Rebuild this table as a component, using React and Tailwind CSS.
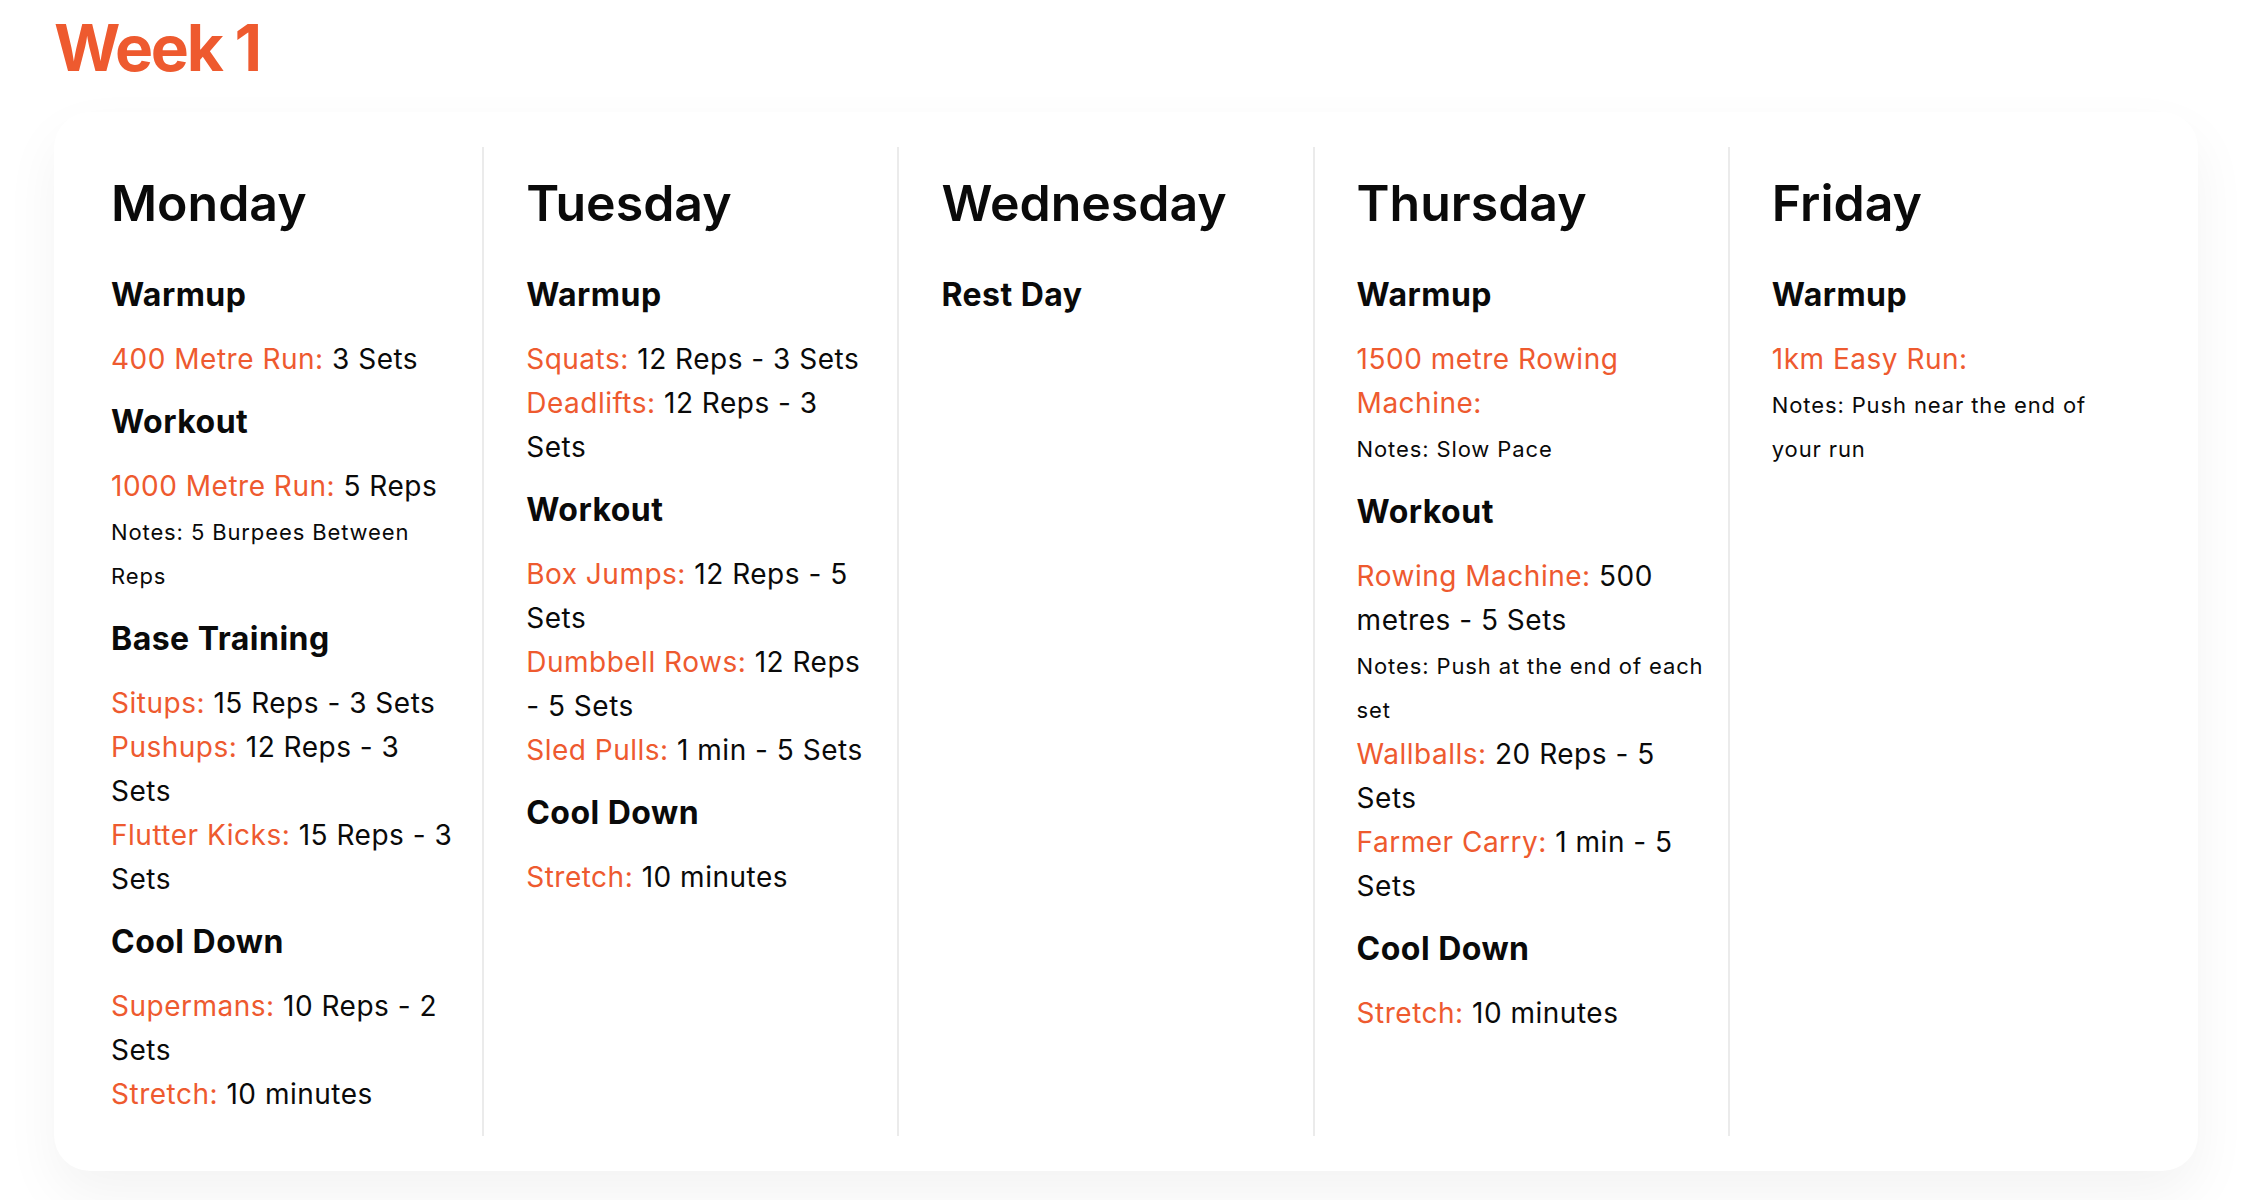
import React from 'react';

const days = [
  {
    name: 'Monday',
    sections: [
      { title: 'Warmup', items: [{ label: '400 Metre Run:', value: '3 Sets' }] },
      {
        title: 'Workout',
        items: [{ label: '1000 Metre Run:', value: '5 Reps', notes: '5 Burpees Between Reps' }],
      },
      {
        title: 'Base Training',
        items: [
          { label: 'Situps:', value: '15 Reps - 3 Sets' },
          { label: 'Pushups:', value: '12 Reps - 3 Sets' },
          { label: 'Flutter Kicks:', value: '15 Reps - 3 Sets' },
        ],
      },
      {
        title: 'Cool Down',
        items: [
          { label: 'Supermans:', value: '10 Reps - 2 Sets' },
          { label: 'Stretch:', value: '10 minutes' },
        ],
      },
    ],
  },
  {
    name: 'Tuesday',
    sections: [
      {
        title: 'Warmup',
        items: [
          { label: 'Squats:', value: '12 Reps - 3 Sets' },
          { label: 'Deadlifts:', value: '12 Reps - 3 Sets' },
        ],
      },
      {
        title: 'Workout',
        items: [
          { label: 'Box Jumps:', value: '12 Reps - 5 Sets' },
          { label: 'Dumbbell Rows:', value: '12 Reps - 5 Sets' },
          { label: 'Sled Pulls:', value: '1 min - 5 Sets' },
        ],
      },
      { title: 'Cool Down', items: [{ label: 'Stretch:', value: '10 minutes' }] },
    ],
  },
  {
    name: 'Wednesday',
    sections: [{ title: 'Rest Day', items: [] }],
  },
  {
    name: 'Thursday',
    sections: [
      {
        title: 'Warmup',
        items: [{ label: '1500 metre Rowing Machine:', notes: 'Slow Pace' }],
      },
      {
        title: 'Workout',
        items: [
          { label: 'Rowing Machine:', value: '500 metres - 5 Sets', notes: 'Push at the end of each set' },
          { label: 'Wallballs:', value: '20 Reps - 5 Sets' },
          { label: 'Farmer Carry:', value: '1 min - 5 Sets' },
        ],
      },
      { title: 'Cool Down', items: [{ label: 'Stretch:', value: '10 minutes' }] },
    ],
  },
  {
    name: 'Friday',
    sections: [
      {
        title: 'Warmup',
        items: [{ label: '1km Easy Run:', notes: 'Push near the end of your run' }],
      },
    ],
  },
];

const Exercise = ({ item }) => (
  <div>
    <p className="text-[28px] leading-[44px] tracking-[0.018em] text-[#0a0a0a]">
      <span className="text-[#ee5a2f]">{item.label}</span>
      {item.value && <> {item.value}</>}
    </p>
    {item.notes && (
      <p className="text-[22px] leading-[44px] tracking-[0.04em] text-[#0a0a0a] mt-[2px]">
        Notes: {item.notes}
      </p>
    )}
  </div>
);

const DayColumn = ({ day, first }) => (
  <div
    className={`border-l-2 pl-[42px] pr-[23px] pt-[26px] pb-[20px] ${
      first ? 'border-transparent' : 'border-[#ebebeb]'
    }`}
  >
    <h2 className="text-[50px] leading-[60px] font-semibold text-[#0a0a0a] mb-[40px]">{day.name}</h2>
    <div className="flex flex-col gap-[19px]">
      {day.sections.map((section) => (
        <div key={section.title} className="flex flex-col gap-[20px]">
          <h3 className="text-[32px] leading-[44px] font-bold tracking-[0.015em] text-[#0a0a0a]">
            {section.title}
          </h3>
          {section.items.length > 0 && (
            <div className="flex flex-col">
              {section.items.map((item) => (
                <Exercise key={item.label} item={item} />
              ))}
            </div>
          )}
        </div>
      ))}
    </div>
  </div>
);

const App = () => {
  return (
    <div className="min-h-screen bg-white px-[54px] pt-[16px] font-['Inter',sans-serif]">
      <h1 className="text-[64px] leading-[64px] font-bold tracking-[-0.035em] text-[#ee5a2f]">Week 1</h1>

      <div className="mt-[32px] bg-white rounded-[36px] shadow-[0_24px_56px_rgba(0,0,0,0.05)] pl-[13px] pr-[55px] py-[35px]">
        <div className="grid grid-cols-5">
          {days.map((day, i) => (
            <DayColumn key={day.name} day={day} first={i === 0} />
          ))}
        </div>
      </div>
    </div>
  );
};

export default App;
